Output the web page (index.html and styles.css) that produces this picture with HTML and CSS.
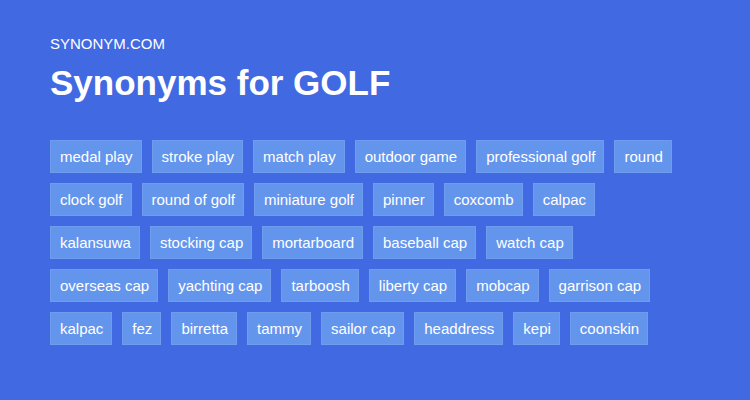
FILE: index.html
```html
<!DOCTYPE html>
<html>
<head>
<meta charset="utf-8">
<link rel="stylesheet" href="styles.css">
</head>
<body>
<div class="page">
  <div class="brand">SYNONYM.COM</div>
  <h1 class="title">Synonyms for GOLF</h1>
  <div class="chips">
    <span class="chip">medal play</span>
    <span class="chip">stroke play</span>
    <span class="chip">match play</span>
    <span class="chip">outdoor game</span>
    <span class="chip">professional golf</span>
    <span class="chip">round</span>
    <span class="chip">clock golf</span>
    <span class="chip">round of golf</span>
    <span class="chip">miniature golf</span>
    <span class="chip">pinner</span>
    <span class="chip">coxcomb</span>
    <span class="chip">calpac</span>
    <span class="chip">kalansuwa</span>
    <span class="chip">stocking cap</span>
    <span class="chip">mortarboard</span>
    <span class="chip">baseball cap</span>
    <span class="chip">watch cap</span>
    <span class="chip">overseas cap</span>
    <span class="chip">yachting cap</span>
    <span class="chip">tarboosh</span>
    <span class="chip">liberty cap</span>
    <span class="chip">mobcap</span>
    <span class="chip">garrison cap</span>
    <span class="chip">kalpac</span>
    <span class="chip">fez</span>
    <span class="chip">birretta</span>
    <span class="chip">tammy</span>
    <span class="chip">sailor cap</span>
    <span class="chip">headdress</span>
    <span class="chip">kepi</span>
    <span class="chip">coonskin</span>
  </div>
</div>
</body>
</html>
```
FILE: styles.css
```css
html, body {
  margin: 0;
  padding: 0;
  background: #4169e1;
  width: 750px;
  height: 400px;
  overflow: hidden;
}
.page {
  padding: 35px 50px 0 50px;
  font-family: "Liberation Sans", Arial, sans-serif;
  color: #ffffff;
}
.brand {
  font-size: 15px;
  line-height: 17px;
}
.title {
  margin: 11px 0 0 0;
  font-size: 35px;
  line-height: 40px;
  font-weight: bold;
}
.chips {
  margin-top: 37px;
  display: flex;
  flex-wrap: wrap;
  gap: 10px;
  width: 630px;
}
.chip {
  background: #6495ed;
  border: 1px solid #6f9cef;
  padding: 0 8px 0 9px;
  height: 31px;
  line-height: 31px;
  font-size: 15px;
  color: #ffffff;
}
```
